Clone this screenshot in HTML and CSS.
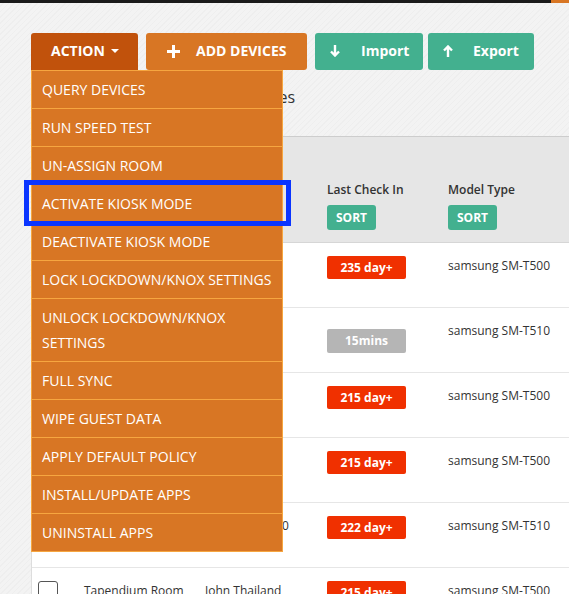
FILE: index.html
```
<!DOCTYPE html>
<html>
<head>
<meta charset="utf-8">
<link rel="stylesheet" href="styles.css">
</head>
<body>
<div class="topbar"><div class="topbar-fill"></div><div class="topbar-accent"></div></div>
<div class="page">
  <div class="toolbar">
    <div class="action-wrap">
      <button class="btn btn-action">ACTION <span class="caret"></span></button>
      <ul class="menu">
        <li>QUERY DEVICES</li>
        <li>RUN SPEED TEST</li>
        <li>UN-ASSIGN ROOM</li>
        <li>ACTIVATE KIOSK MODE</li>
        <li>DEACTIVATE KIOSK MODE</li>
        <li>LOCK LOCKDOWN/KNOX SETTINGS</li>
        <li>UNLOCK LOCKDOWN/KNOX SETTINGS</li>
        <li>FULL SYNC</li>
        <li>WIPE GUEST DATA</li>
        <li>APPLY DEFAULT POLICY</li>
        <li>INSTALL/UPDATE APPS</li>
        <li>UNINSTALL APPS</li>
      </ul>
      <div class="highlight"></div>
    </div>
    <button class="btn btn-add">
      <svg class="ico-plus" width="13" height="13" viewBox="0 0 13 13"><path d="M6.5 0v13M0 6.5h13" stroke="#fff" stroke-width="3"/></svg>
      <span>ADD DEVICES</span>
    </button>
    <button class="btn btn-green btn-import">
      <svg class="ico-arrow" width="10" height="12" viewBox="0 0 10 12"><path d="M5 0v10.5M1 6.5l4 4 4-4" stroke="#fff" stroke-width="2.4" fill="none"/></svg>
      <span>Import</span>
    </button>
    <button class="btn btn-green btn-export">
      <svg class="ico-arrow" width="10" height="12" viewBox="0 0 10 12"><path d="M5 12V1.5M1 5.5l4-4 4 4" stroke="#fff" stroke-width="2.4" fill="none"/></svg>
      <span>Export</span>
    </button>
  </div>
  <div class="summary"><span class="summary-text">Showing 245 devices</span></div>
  <div class="table">
    <div class="thead">
      <div class="th"></div>
      <div class="th">Room</div>
      <div class="th">Guest</div>
      <div class="th"><div>Last Check In</div><span class="sort">SORT</span></div>
      <div class="th"><div>Model Type</div><span class="sort">SORT</span></div>
    </div>
    <div class="row">
      <div class="td"><span class="check"></span></div>
      <div class="td">Room 101</div>
      <div class="td">Guest</div>
      <div class="td"><span class="badge">235 day+</span></div>
      <div class="td">samsung SM-T500</div>
    </div>
    <div class="row">
      <div class="td"><span class="check"></span></div>
      <div class="td">Room 102</div>
      <div class="td">Guest</div>
      <div class="td"><span class="badge badge-gray">15mins</span></div>
      <div class="td">samsung SM-T510</div>
    </div>
    <div class="row">
      <div class="td"><span class="check"></span></div>
      <div class="td">Room 103</div>
      <div class="td">Guest</div>
      <div class="td"><span class="badge">215 day+</span></div>
      <div class="td">samsung SM-T500</div>
    </div>
    <div class="row">
      <div class="td"><span class="check"></span></div>
      <div class="td">Room 104</div>
      <div class="td">Guest</div>
      <div class="td"><span class="badge">215 day+</span></div>
      <div class="td">samsung SM-T500</div>
    </div>
    <div class="row">
      <div class="td"><span class="check"></span></div>
      <div class="td">Room 105</div>
      <div class="td">Kiosk Lobby 10</div>
      <div class="td"><span class="badge">222 day+</span></div>
      <div class="td">samsung SM-T510</div>
    </div>
    <div class="row">
      <div class="td"><span class="check"></span></div>
      <div class="td">Tapendium Room</div>
      <div class="td">John Thailand</div>
      <div class="td"><span class="badge">215 day+</span></div>
      <div class="td">samsung SM-T500</div>
    </div>
  </div>
</div>
</body>
</html>
```
FILE: styles.css
```
* { box-sizing: border-box; }
html, body { margin: 0; padding: 0; }
body {
  width: 569px;
  height: 594px;
  overflow: hidden;
  font-family: "Open Sans", "Liberation Sans", sans-serif;
  color: #333;
  background-color: #f3f3f3;
  background-image: repeating-linear-gradient(135deg, rgba(0,0,0,0.018) 0 1px, transparent 1px 4px);
}
.topbar { display: flex; height: 3px; }
.topbar-fill { flex: 1; background: #1a1a1a; }
.topbar-accent { width: 18px; background: #d87624; }
.page { padding: 30px 0 0 31px; }
.toolbar { display: flex; height: 37px; }
.btn {
  height: 37px;
  border: 0;
  border-radius: 3px;
  color: #fff;
  font-family: "Open Sans", "Liberation Sans", sans-serif;
  font-size: 14px;
  font-weight: 700;
  line-height: 20px;
  display: flex;
  align-items: center;
  padding: 0 0 1px 0;
  cursor: pointer;
}
.action-wrap { position: relative; }
.btn-action {
  width: 107px;
  background: #c1520c;
  padding-left: 20px;
  border-radius: 3px 3px 0 0;
}
.caret {
  display: inline-block;
  width: 0; height: 0;
  margin-left: 6px;
  border-left: 4px solid transparent;
  border-right: 4px solid transparent;
  border-top: 4px solid #fff;
}
.btn-add {
  width: 161px;
  margin-left: 8px;
  background: #d87624;
  padding-left: 21px;
}
.ico-plus { margin-right: 16px; }
.btn-green { background: #43b08f; width: 108px; padding-left: 15px; }
.btn-import { margin-left: 8px; }
.btn-export { margin-left: 5px; width: 106px; }
.ico-arrow { margin-right: 21px; }
.btn-export .ico-arrow { margin-right: 20px; }

.menu {
  position: absolute;
  top: 37px;
  left: 0;
  width: 252px;
  margin: 0;
  padding: 0;
  list-style: none;
  background: #d87624;
  border: 1px solid #f6a640;
  z-index: 5;
}
.menu li {
  color: #fff;
  font-size: 14px;
  line-height: 25px;
  padding: 6px 0 6px 10px;
  border-bottom: 1px solid #f6a640;
}
.menu li:nth-child(7) { padding-right: 20px; }
.menu li:last-child { border-bottom: 0; }
.highlight {
  position: absolute;
  left: -7px;
  top: 147px;
  width: 267px;
  height: 46px;
  border: 5px solid #0a35ff;
  z-index: 6;
}

.summary {
  height: 66px;
  padding-top: 16px;
  font-size: 16px;
  line-height: 22px;
  white-space: nowrap;
}
.summary-text { display: inline-block; width: 264px; text-align: right; }
.table { width: 560px; background: #fff; border-left: 1px solid #ddd; }
.thead, .row {
  display: grid;
  grid-template-columns: 52px 121px 122px 121px 1fr;
}
.thead {
  height: 107px;
  background: #e6e6e6;
  border-top: 1px solid #cdcdcd;
  border-bottom: 1px solid #d6d6d6;
}
.th {
  align-self: end;
  padding-bottom: 12px;
  font-size: 12px;
  font-weight: 600;
  line-height: 20px;
}
.sort {
  display: inline-block;
  margin-top: 5px;
  width: 49px;
  height: 25px;
  line-height: 25px;
  text-align: center;
  background: #43b08f;
  color: #fff;
  border-radius: 3px;
  font-size: 12px;
  font-weight: 700;
}
.row {
  height: 65px;
  border-bottom: 1px solid #e6e6e6;
}
.td {
  padding-top: 13px;
  font-size: 12px;
  line-height: 20px;
  white-space: nowrap;
}
.td:first-child { padding-left: 6px; }
.check {
  display: block;
  width: 20px;
  height: 20px;
  border: 1px solid #555;
  border-radius: 3px;
  background: #fff;
}
.badge {
  display: inline-block;
  width: 79px;
  height: 23px;
  line-height: 23px;
  text-align: center;
  color: #fff;
  background: #f03000;
  border-radius: 2px;
  font-size: 12px;
  font-weight: 700;
}
.badge-gray { background: #b5b5b5; margin-top: 8px; height: 24px; line-height: 24px; }
```
